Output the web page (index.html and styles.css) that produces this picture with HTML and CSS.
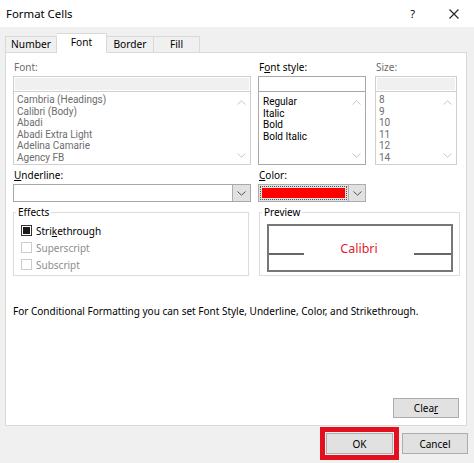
FILE: index.html
```html
<!DOCTYPE html>
<html>
<head>
<meta charset="utf-8">
<title>Format Cells</title>
<link rel="stylesheet" href="styles.css">
</head>
<body>
<div class="dialog">
  <div class="titlebar">
    <span class="title">Format Cells</span>
    <span class="help">?</span>
    <svg class="close" width="10" height="10" viewBox="0 0 10 10"><path d="M0.5 0.5L9.5 9.5M9.5 0.5L0.5 9.5" stroke="#222" stroke-width="1.1" fill="none"/></svg>
  </div>

  <div class="tabs">
    <div class="tab tab-number">Number</div>
    <div class="tab tab-font active">Font</div>
    <div class="tab tab-border">Border</div>
    <div class="tab tab-fill">Fill</div>
  </div>

  <div class="panel">
    <div class="top-grid">
      <div class="col">
        <div class="label dim">Font:</div>
        <div class="input input-dim"></div>
        <div class="list list-dim">
          <div class="items dim">
            <div>Cambria (Headings)</div>
            <div>Calibri (Body)</div>
            <div>Abadi</div>
            <div>Abadi Extra Light</div>
            <div>Adelina Camarie</div>
            <div>Agency FB</div>
          </div>
          <div class="scroll">
            <svg width="9" height="5" viewBox="0 0 9 5"><path d="M0.5 4.5L4.5 0.8L8.5 4.5" stroke="#c6c6c6" fill="none"/></svg>
            <svg width="9" height="5" viewBox="0 0 9 5"><path d="M0.5 0.5L4.5 4.2L8.5 0.5" stroke="#c6c6c6" fill="none"/></svg>
          </div>
        </div>
        <div class="label label-under"><u>U</u>nderline:</div>
        <div class="combo">
          <div class="combo-field"></div>
          <div class="combo-btn"><svg width="9" height="5" viewBox="0 0 9 5"><path d="M0.5 0.5L4.5 4.2L8.5 0.5" stroke="#555" fill="none"/></svg></div>
        </div>
      </div>

      <div class="col">
        <div class="label">F<u>o</u>nt style:</div>
        <div class="input"></div>
        <div class="list">
          <div class="items items-style">
            <div>Regular</div>
            <div>Italic</div>
            <div>Bold</div>
            <div>Bold Italic</div>
          </div>
          <div class="scroll">
            <svg width="9" height="5" viewBox="0 0 9 5"><path d="M0.5 4.5L4.5 0.8L8.5 4.5" stroke="#c6c6c6" fill="none"/></svg>
            <svg width="9" height="5" viewBox="0 0 9 5"><path d="M0.5 0.5L4.5 4.2L8.5 0.5" stroke="#c6c6c6" fill="none"/></svg>
          </div>
        </div>
        <div class="label label-under"><u>C</u>olor:</div>
        <div class="color-combo">
          <div class="color-field"><div class="swatch"></div></div>
          <div class="combo-btn color-btn"><svg width="9" height="5" viewBox="0 0 9 5"><path d="M0.5 0.5L4.5 4.2L8.5 0.5" stroke="#555" fill="none"/></svg></div>
        </div>
      </div>

      <div class="col col-size">
        <div class="label dim">Size:</div>
        <div class="input input-dim"></div>
        <div class="list list-dim">
          <div class="items items-size dim">
            <div>8</div>
            <div>9</div>
            <div>10</div>
            <div>11</div>
            <div>12</div>
            <div>14</div>
          </div>
          <div class="scroll">
            <svg width="9" height="5" viewBox="0 0 9 5"><path d="M0.5 4.5L4.5 0.8L8.5 4.5" stroke="#c6c6c6" fill="none"/></svg>
            <svg width="9" height="5" viewBox="0 0 9 5"><path d="M0.5 0.5L4.5 4.2L8.5 0.5" stroke="#c6c6c6" fill="none"/></svg>
          </div>
        </div>
      </div>
    </div>

    <div class="groups">
      <fieldset class="group effects">
        <legend>Effects</legend>
        <div class="check-row">
          <span class="checkbox checked"><span class="mark"></span></span>
          <span>Stri<u>k</u>ethrough</span>
        </div>
        <div class="check-row dim-light">
          <span class="checkbox off"></span>
          <span>Superscript</span>
        </div>
        <div class="check-row dim-light">
          <span class="checkbox off"></span>
          <span>Subscript</span>
        </div>
      </fieldset>
      <fieldset class="group preview">
        <legend>Preview</legend>
        <div class="preview-box">
          <span class="pline pline-left"></span>
          <span class="sample">Calibri</span>
          <span class="pline pline-right"></span>
        </div>
      </fieldset>
    </div>

    <p class="note">For Conditional Formatting you can set Font Style, Underline, Color, and Strikethrough.</p>

    <div class="panel-actions">
      <button class="btn btn-clear">Clea<u>r</u></button>
    </div>
  </div>

  <div class="footer">
    <button class="btn btn-ok">OK</button>
    <button class="btn btn-cancel">Cancel</button>
  </div>
</div>
</body>
</html>
```

FILE: styles.css
```css
* { box-sizing: border-box; }

html, body {
  margin: 0;
  padding: 0;
}

body {
  width: 474px;
  height: 463px;
  overflow: hidden;
  background: #f0f0f0;
  font-family: "Noto Sans", "Open Sans", sans-serif;
  font-size: 10px;
  color: #000;
}

.dialog {
  width: 474px;
  height: 463px;
  display: flex;
  flex-direction: column;
}

/* Title bar */
.titlebar {
  height: 27px;
  background: #fff;
  display: flex;
  align-items: center;
  padding-left: 6px;
  padding-right: 15px;
}
.title {
  flex: 1;
  font-size: 11.4px;
}
.help {
  font-size: 11px;
  margin-right: 34px;
}
.close { display: block; }

/* Tabs */
.tabs {
  height: 26px;
  margin-bottom: -1px;
  display: flex;
  align-items: flex-end;
  padding-left: 5px;
  position: relative;
  z-index: 1;
}
.tab {
  height: 17px;
  border: 1px solid #d9d9d9;
  border-left: none;
  background: #f0f0f0;
  display: flex;
  align-items: center;
  justify-content: center;
  font-size: 10.2px;
  padding-bottom: 1px;
}
.tab-number { width: 52px; border-left: 1px solid #d9d9d9; }
.tab-font { width: 50px; }
.tab-border { width: 47px; }
.tab-fill { width: 46px; }
.tab.active {
  height: 20px;
  background: #fff;
  border-bottom-color: #fff;
  padding-bottom: 2px;
}

/* Panel */
.panel {
  margin-left: 5px;
  width: 462px;
  height: 374px;
  background: #fff;
  border: 1px solid #d9d9d9;
  padding: 7px;
  display: flex;
  flex-direction: column;
}

.top-grid {
  display: grid;
  grid-template-columns: 238px 108px 84px;
  column-gap: 7px;
}
.col-size { margin-left: 2px; }

.label {
  height: 14px;
  line-height: 14px;
  margin-bottom: 2px;
  padding-left: 1px;
}
.label-under { margin-top: 3px; }
.dim { color: #6d6d6d; }

.input {
  height: 16px;
  border: 1px solid #a8a8a8;
  background: #fff;
}
.input-dim {
  background: #f0f0f0;
  border-color: #cfcfcf;
  box-shadow: inset 0 0 0 1px #fff;
}

.list {
  height: 73px;
  border: 1px solid #a8a8a8;
  border-top: none;
  display: flex;
  background: #fff;
}
.list-dim { border-color: #cfcfcf; }
.items {
  flex: 1;
  padding: 2px 0 0 3px;
  font-family: Roboto, "Noto Sans", sans-serif;
  font-size: 10px;
  line-height: 11.6px;
  white-space: nowrap;
  overflow: hidden;
}
.items-style { padding-left: 4px; padding-top: 4px; color: #000; }
.scroll {
  width: 17px;
  display: flex;
  flex-direction: column;
  align-items: center;
  justify-content: space-between;
  padding: 8px 0 6px;
}
.scroll svg { display: block; }

/* Underline combo */
.combo {
  height: 18px;
  border: 1px solid #a8a8a8;
  display: flex;
  background: #fff;
}
.combo-field { flex: 1; }
.combo-btn {
  width: 18px;
  background: #e1e1e1;
  border-left: 1px solid #adadad;
  display: flex;
  align-items: center;
  justify-content: center;
}
.combo-btn svg { display: block; }

/* Color combo */
.color-combo {
  height: 18px;
  border: 1px solid #adadad;
  background: #e1e1e1;
  display: flex;
}
.color-field {
  flex: 1;
  padding: 1px;
  border: 1px dotted #555;
  margin: 1px;
  display: flex;
}
.swatch {
  flex: 1;
  background: #ff0000;
}
.color-btn {
  width: 17px;
  background: #e1e1e1;
}

/* Groups */
.groups {
  margin-top: 3px;
  display: grid;
  grid-template-columns: 236px 201px;
  column-gap: 10px;
}
.group {
  margin: 0;
  padding: 0;
  min-width: 0;
  border: 1px solid #dcdcdc;
}
.group legend {
  padding: 0 2px;
  margin-left: -5px;
  line-height: 14px;
  font-size: 10px;
}
.effects {
  height: 71px;
  padding: 3px 7px;
}
.check-row {
  height: 17px;
  display: flex;
  align-items: center;
  gap: 4px;
}
.dim-light { color: #8d8d8d; }
.checkbox {
  width: 11px;
  height: 11px;
  border: 1px solid #333;
  display: flex;
  align-items: center;
  justify-content: center;
  background: #fff;
}
.checkbox.off { border-color: #cccccc; }
.mark {
  width: 7px;
  height: 7px;
  background: #1a1a1a;
}

.preview {
  height: 71px;
  padding: 5px 6px 3px 7px;
}
.preview-box {
  height: 48px;
  border: 2px solid #777;
  display: flex;
  align-items: center;
}
.pline {
  height: 2px;
  background: #666;
  margin-top: 12px;
}
.pline-left { width: 35px; }
.pline-right { width: 37px; }
.sample {
  flex: 1;
  text-align: center;
  color: #e5202e;
  font-size: 12.5px;
}

.note {
  margin: 28px 0 0 0;
  line-height: 14px;
  white-space: nowrap;
}

.panel-actions {
  margin-top: auto;
  display: flex;
  justify-content: flex-end;
}

/* Buttons */
.btn {
  font-family: "Noto Sans", "Open Sans", sans-serif;
  font-size: 10px;
  color: #000;
  background: #e1e1e1;
  border: 1px solid #adadad;
  padding: 0;
  height: 21px;
  margin: 0;
}
.btn-clear { width: 66px; height: 20px; }

.footer {
  flex: 1;
  display: flex;
  justify-content: flex-end;
  align-items: flex-start;
  padding: 7px 6px 0 0;
  gap: 9px;
}
.btn-ok {
  width: 67px;
  outline: 5px solid #e30f1f;
  outline-offset: 1px;
}
.btn-cancel { width: 66px; }
```
